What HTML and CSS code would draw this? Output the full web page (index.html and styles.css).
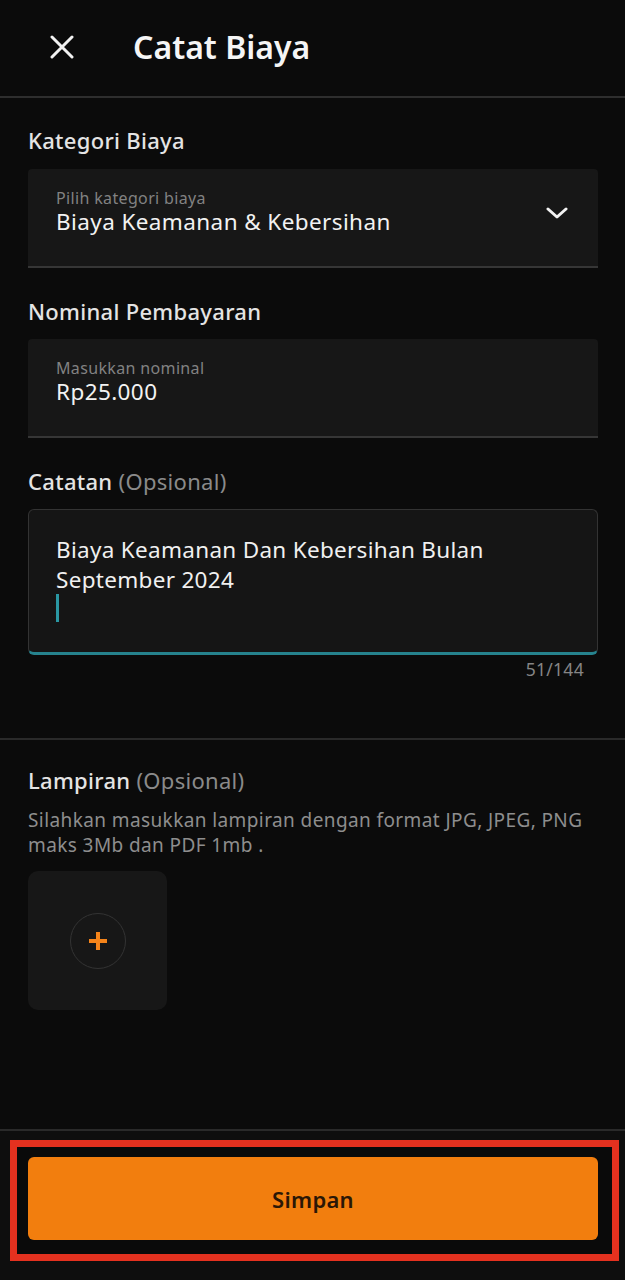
FILE: index.html
```html
<!DOCTYPE html>
<html lang="id">
<head>
<meta charset="utf-8">
<title>Catat Biaya</title>
<link rel="stylesheet" href="styles.css">
</head>
<body>
<div class="screen">
  <header class="topbar">
    <svg class="close-icon" width="24" height="24" viewBox="0 0 24 24" aria-hidden="true">
      <path d="M2 2 L22 22 M22 2 L2 22" stroke="#f2f2f2" stroke-width="3" stroke-linecap="round" fill="none"/>
    </svg>
    <h1 class="title">Catat Biaya</h1>
  </header>

  <main class="form">
    <div class="field-label label-first">Kategori Biaya</div>
    <div class="box select-box">
      <div class="box-text">
        <div class="hint">Pilih kategori biaya</div>
        <div class="value">Biaya Keamanan &amp; Kebersihan</div>
      </div>
      <svg class="chevron" width="22" height="12" viewBox="0 0 22 12" aria-hidden="true">
        <path d="M2 2 L11 10 L20 2" stroke="#f2f2f2" stroke-width="3" stroke-linecap="round" stroke-linejoin="round" fill="none"/>
      </svg>
    </div>

    <div class="field-label">Nominal Pembayaran</div>
    <div class="box">
      <div class="box-text">
        <div class="hint">Masukkan nominal</div>
        <div class="value">Rp25.000</div>
      </div>
    </div>

    <div class="field-label">Catatan <span class="optional">(Opsional)</span></div>
    <div class="textarea">
      <div class="note">Biaya Keamanan Dan Kebersihan Bulan<br>September 2024</div>
      <div class="caret"></div>
    </div>
    <div class="counter">51/144</div>
  </main>

  <div class="divider divider-mid"></div>

  <section class="form attach">
    <div class="field-label label-attach">Lampiran <span class="optional">(Opsional)</span></div>
    <p class="desc">Silahkan masukkan lampiran dengan format JPG, JPEG, PNG<br>maks 3Mb dan PDF 1mb .</p>
    <div class="upload">
      <div class="plus-circle">
        <svg width="22" height="22" viewBox="0 0 22 22" aria-hidden="true">
          <path d="M11 2 V20 M2 11 H20" stroke="#f5841a" stroke-width="4" fill="none"/>
        </svg>
      </div>
    </div>
  </section>

  <footer class="footer">
    <div class="highlight">
      <button class="save">Simpan</button>
    </div>
  </footer>
</div>
</body>
</html>
```

FILE: styles.css
```css
* { box-sizing: border-box; }

html, body {
  margin: 0;
  padding: 0;
  background: #0b0b0b;
}

body {
  font-family: "Noto Sans", "Open Sans", sans-serif;
  color: #ececec;
}

.screen {
  width: 625px;
  height: 1280px;
  display: flex;
  flex-direction: column;
  background: #0b0b0b;
}

.topbar {
  height: 98px;
  flex: none;
  display: flex;
  align-items: center;
  border-bottom: 2px solid #2e2e2e;
  padding-left: 50px;
  padding-bottom: 2px;
}

.close-icon {
  display: block;
  flex: none;
}

.title {
  margin: 0 0 0 59px;
  font-size: 32px;
  font-weight: 600;
  color: #f5f5f5;
  letter-spacing: 0;
  line-height: 40px;
}

.form {
  padding: 0 27px 0 28px;
}

.field-label {
  font-size: 22px;
  font-weight: 500;
  line-height: 30px;
  color: #e4e4e4;
  margin-top: 28px;
  margin-bottom: 13px;
  letter-spacing: 0.3px;
}

.label-first { margin-top: 27px; margin-bottom: 14px; }

.optional {
  color: #8a8a8a;
  font-weight: 400;
}

.box {
  height: 99px;
  background: #171717;
  border-radius: 4px 4px 0 0;
  border-bottom: 2px solid #363636;
  display: flex;
  align-items: center;
  padding: 0 30px 12px 28px;
}

.box-text { flex: 1; }

.hint {
  font-size: 16px;
  line-height: 20px;
  color: #828282;
  letter-spacing: 0.35px;
}

.value {
  font-size: 22.5px;
  line-height: 28px;
  color: #f2f2f2;
  letter-spacing: 0.4px;
}

.chevron { display: block; flex: none; margin-top: 2px; }

.textarea {
  height: 146px;
  border: 1px solid #333;
  border-bottom: 3px solid #26838e;
  border-radius: 6px;
  background: #151515;
  padding: 25px 27px 0 27px;
}

.note {
  font-size: 22.5px;
  line-height: 30px;
  color: #f0f0f0;
  letter-spacing: 0.3px;
}

.caret {
  width: 3px;
  height: 28px;
  background: #2a97a3;
  margin-top: -1px;
}

.counter {
  text-align: right;
  padding-right: 14px;
  margin-top: 3px;
  font-size: 17.5px;
  line-height: 22px;
  color: #858585;
  letter-spacing: 0.3px;
}

.divider {
  height: 2px;
  background: #2a2a2a;
  flex: none;
}

.divider-mid { margin-top: 58px; }

.attach { flex: 1; }

.label-attach { margin-top: 25px; margin-bottom: 13px; }

.desc {
  margin: 0;
  font-size: 19px;
  line-height: 25px;
  color: #8e8e8e;
  letter-spacing: 0.4px;
}

.upload {
  margin-top: 13px;
  width: 139px;
  height: 139px;
  background: #171717;
  border-radius: 10px;
  display: flex;
  align-items: center;
  justify-content: center;
}

.plus-circle {
  width: 56px;
  height: 56px;
  border-radius: 50%;
  border: 1.5px solid #333;
  display: flex;
  align-items: center;
  justify-content: center;
}

.plus-circle svg { display: block; }

.footer {
  flex: none;
  height: 151px;
  border-top: 2px solid #2a2a2a;
  background: #0e0e0e;
  padding: 9px 6px 0 10px;
}

.highlight {
  border: 7px solid #e4311f;
  background: #0a0a0a;
  padding: 10px 14px 14px 11px;
}

.save {
  display: block;
  width: 100%;
  height: 83px;
  border: none;
  border-radius: 6px;
  background: #f27e0e;
  color: #2b1706;
  font-family: "Noto Sans", "Open Sans", sans-serif;
  font-size: 22px;
  font-weight: 600;
  letter-spacing: 0.3px;
  cursor: pointer;
}
```
